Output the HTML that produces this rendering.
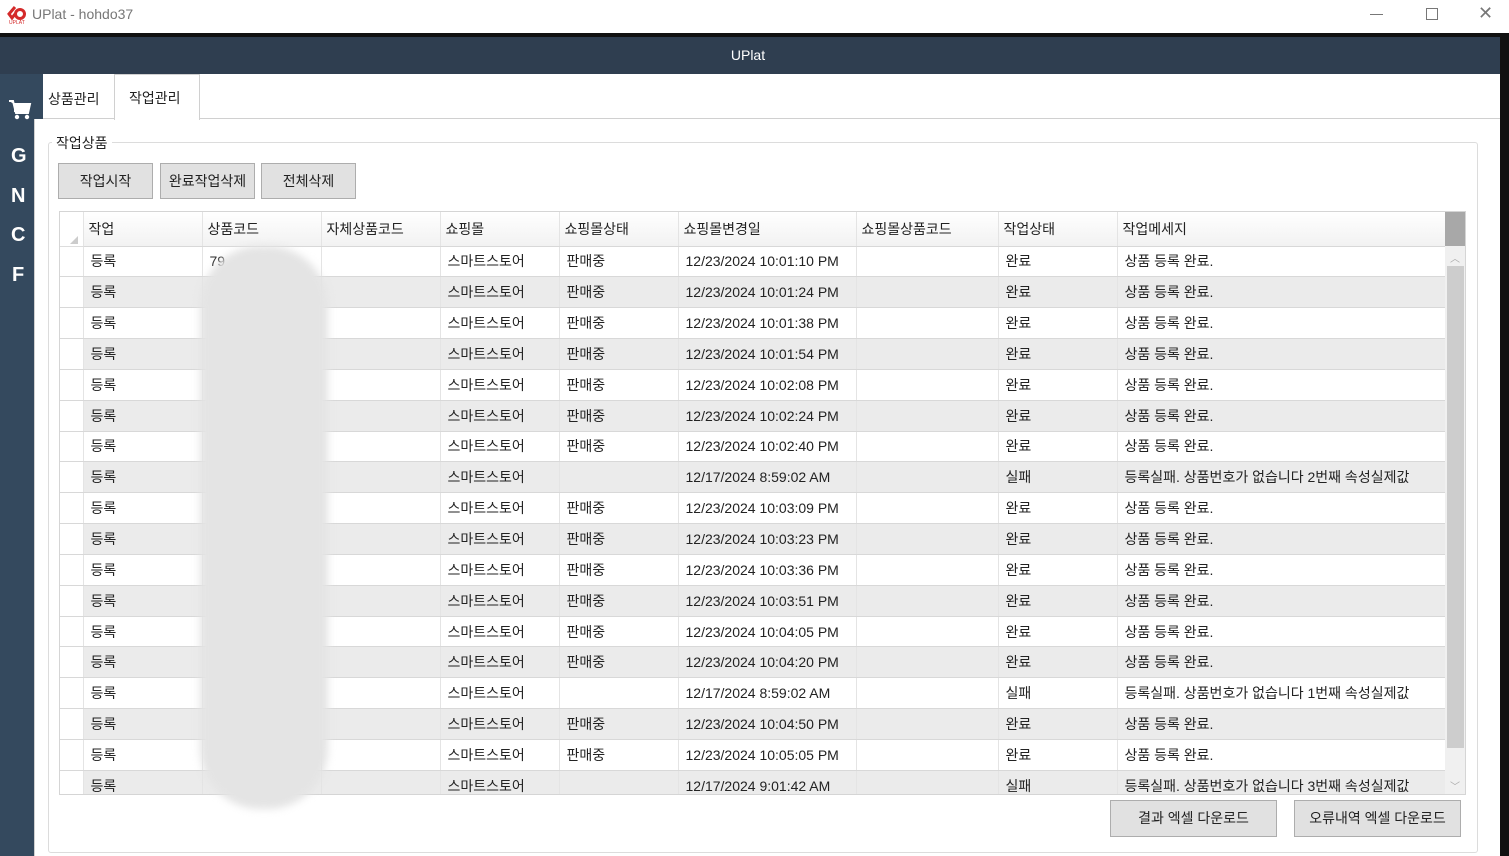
<!DOCTYPE html>
<html><head><meta charset="utf-8"><style>
*{margin:0;padding:0;box-sizing:border-box}
body{width:1509px;height:856px;overflow:hidden;background:#fff;font-family:"Liberation Sans","Noto Sans CJK KR",sans-serif;position:relative;color:#222}
.a{position:absolute}
.btn{position:absolute;background:#e1e1e1;border:1px solid #adadad;font-size:14px;text-align:center;color:#222}
table{border-collapse:collapse;table-layout:fixed;font-size:14px}
td{height:30.85px;border-right:1px solid #e4e4e4;border-bottom:1px solid #d8d8d8;padding-left:7px;white-space:nowrap;overflow:hidden}
tr.h td{padding-left:5px}
tr.g td{background:#ebebeb}
td.rh{background:#fff!important;border-right:1px solid #e4e4e4;padding:0}
</style></head><body>
<div class="a" style="left:0;top:0;width:1509px;height:33px;background:#fff"></div>
<svg class="a" style="left:6px;top:5px" width="22" height="20" viewBox="0 0 22 20"><path d="M9 2 L3 9 L6 13 L9 9" stroke="#d42a2a" stroke-width="3" fill="none"/><circle cx="14" cy="9" r="4.5" stroke="#d42a2a" stroke-width="3" fill="none"/><text x="3" y="19" font-size="5" fill="#d42a2a" font-family="Liberation Sans">UPLAT</text></svg>
<div class="a" style="left:32px;top:6px;font-size:14px;color:#777">UPlat - hohdo37</div>
<div class="a" style="left:1370px;top:14px;width:13px;height:1px;background:#777"></div>
<div class="a" style="left:1426px;top:8px;width:12px;height:12px;border:1px solid #777"></div>
<div class="a" style="left:1478px;top:3px;font-size:18px;color:#777">✕</div>
<div class="a" style="left:0;top:33px;width:1509px;height:4px;background:#111"></div>
<div class="a" style="left:1500px;top:33px;width:9px;height:823px;background:#111"></div>
<div class="a" style="left:0;top:37px;width:1500px;height:37px;background:#2f3e50"></div>
<div class="a" style="left:-2px;top:47px;width:1500px;text-align:center;color:#fff;font-size:14px">UPlat</div>
<div class="a" style="left:0;top:74px;width:34px;height:782px;background:#34495e"></div>
<div class="a" style="left:34px;top:74px;width:9px;height:45px;background:#34495e"></div>
<svg class="a" style="left:8px;top:99px" width="24" height="22" viewBox="0 0 24 22"><path d="M1 2 H5 L8 14 H20 L22 5 H6" fill="#fff" stroke="#fff" stroke-width="2"/><rect x="6" y="5" width="15" height="8" fill="#fff"/><circle cx="9" cy="18" r="2.2" fill="#fff"/><circle cx="19" cy="18" r="2.2" fill="#fff"/></svg>
<div class="a" style="left:11px;top:144px;color:#fff;font-weight:bold;font-size:20px;line-height:24px">G</div>
<div class="a" style="left:11px;top:184px;color:#fff;font-weight:bold;font-size:20px;line-height:24px">N</div>
<div class="a" style="left:11px;top:223px;color:#fff;font-weight:bold;font-size:20px;line-height:24px">C</div>
<div class="a" style="left:12px;top:263px;color:#fff;font-weight:bold;font-size:20px;line-height:24px">F</div>
<div class="a" style="left:43px;top:118px;width:1457px;height:1px;background:#d0d0d0"></div>
<div class="a" style="left:48px;top:89px;font-size:14px">상품관리</div>
<div class="a" style="left:114px;top:74px;width:86px;height:46px;border:1px solid #d0d0d0;border-bottom:none;background:#fff"></div>
<div class="a" style="left:129px;top:88px;font-size:14px">작업관리</div>
<div class="a" style="left:34px;top:119px;width:9px;height:737px;background:#fff;border-left:1px solid #d0d0d0"></div>
<div class="a" style="left:48px;top:142px;width:1430px;height:711px;border:1px solid #dcdcdc;border-radius:3px"></div>
<div class="a" style="left:52px;top:133px;padding:0 4px;background:#fff;font-size:14px">작업상품</div>
<div class="btn" style="left:58px;top:163px;width:95px;height:36px;line-height:34px">작업시작</div>
<div class="btn" style="left:160px;top:163px;width:95px;height:36px;line-height:34px">완료작업삭제</div>
<div class="btn" style="left:261px;top:163px;width:95px;height:36px;line-height:34px">전체삭제</div>
<div class="a" style="left:59px;top:211px;width:1407px;height:584px;border:1px solid #d5d5d5;overflow:hidden;background:#fff">
<table style="width:1386px">
<colgroup><col style="width:23px"><col style="width:119px"><col style="width:119px"><col style="width:119px"><col style="width:119px"><col style="width:119px"><col style="width:178px"><col style="width:142px"><col style="width:119px"><col style="width:329px"></colgroup>
<tr class="h" style="background:linear-gradient(#fff,#f2f2f2)"><td class="rh" style="height:34px;border-bottom:1px solid #ddd;position:relative"><div style="position:absolute;left:10px;bottom:2px;width:0;height:0;border-left:8px solid transparent;border-bottom:8px solid #ccc"></div></td><td style="height:34px">작업</td><td>상품코드</td><td>자체상품코드</td><td>쇼핑몰</td><td>쇼핑몰상태</td><td>쇼핑몰변경일</td><td>쇼핑몰상품코드</td><td>작업상태</td><td>작업메세지</td></tr>
<tr><td class="rh"></td><td>등록</td><td>79</td><td></td><td>스마트스토어</td><td>판매중</td><td>12/23/2024 10:01:10 PM</td><td></td><td>완료</td><td>상품 등록 완료.</td></tr>
<tr class="g"><td class="rh"></td><td>등록</td><td></td><td></td><td>스마트스토어</td><td>판매중</td><td>12/23/2024 10:01:24 PM</td><td></td><td>완료</td><td>상품 등록 완료.</td></tr>
<tr><td class="rh"></td><td>등록</td><td></td><td></td><td>스마트스토어</td><td>판매중</td><td>12/23/2024 10:01:38 PM</td><td></td><td>완료</td><td>상품 등록 완료.</td></tr>
<tr class="g"><td class="rh"></td><td>등록</td><td></td><td></td><td>스마트스토어</td><td>판매중</td><td>12/23/2024 10:01:54 PM</td><td></td><td>완료</td><td>상품 등록 완료.</td></tr>
<tr><td class="rh"></td><td>등록</td><td></td><td></td><td>스마트스토어</td><td>판매중</td><td>12/23/2024 10:02:08 PM</td><td></td><td>완료</td><td>상품 등록 완료.</td></tr>
<tr class="g"><td class="rh"></td><td>등록</td><td></td><td></td><td>스마트스토어</td><td>판매중</td><td>12/23/2024 10:02:24 PM</td><td></td><td>완료</td><td>상품 등록 완료.</td></tr>
<tr><td class="rh"></td><td>등록</td><td></td><td></td><td>스마트스토어</td><td>판매중</td><td>12/23/2024 10:02:40 PM</td><td></td><td>완료</td><td>상품 등록 완료.</td></tr>
<tr class="g"><td class="rh"></td><td>등록</td><td></td><td></td><td>스마트스토어</td><td></td><td>12/17/2024 8:59:02 AM</td><td></td><td>실패</td><td>등록실패. 상품번호가 없습니다 2번째 속성실제값</td></tr>
<tr><td class="rh"></td><td>등록</td><td></td><td></td><td>스마트스토어</td><td>판매중</td><td>12/23/2024 10:03:09 PM</td><td></td><td>완료</td><td>상품 등록 완료.</td></tr>
<tr class="g"><td class="rh"></td><td>등록</td><td></td><td></td><td>스마트스토어</td><td>판매중</td><td>12/23/2024 10:03:23 PM</td><td></td><td>완료</td><td>상품 등록 완료.</td></tr>
<tr><td class="rh"></td><td>등록</td><td></td><td></td><td>스마트스토어</td><td>판매중</td><td>12/23/2024 10:03:36 PM</td><td></td><td>완료</td><td>상품 등록 완료.</td></tr>
<tr class="g"><td class="rh"></td><td>등록</td><td></td><td></td><td>스마트스토어</td><td>판매중</td><td>12/23/2024 10:03:51 PM</td><td></td><td>완료</td><td>상품 등록 완료.</td></tr>
<tr><td class="rh"></td><td>등록</td><td></td><td></td><td>스마트스토어</td><td>판매중</td><td>12/23/2024 10:04:05 PM</td><td></td><td>완료</td><td>상품 등록 완료.</td></tr>
<tr class="g"><td class="rh"></td><td>등록</td><td></td><td></td><td>스마트스토어</td><td>판매중</td><td>12/23/2024 10:04:20 PM</td><td></td><td>완료</td><td>상품 등록 완료.</td></tr>
<tr><td class="rh"></td><td>등록</td><td></td><td></td><td>스마트스토어</td><td></td><td>12/17/2024 8:59:02 AM</td><td></td><td>실패</td><td>등록실패. 상품번호가 없습니다 1번째 속성실제값</td></tr>
<tr class="g"><td class="rh"></td><td>등록</td><td></td><td></td><td>스마트스토어</td><td>판매중</td><td>12/23/2024 10:04:50 PM</td><td></td><td>완료</td><td>상품 등록 완료.</td></tr>
<tr><td class="rh"></td><td>등록</td><td></td><td></td><td>스마트스토어</td><td>판매중</td><td>12/23/2024 10:05:05 PM</td><td></td><td>완료</td><td>상품 등록 완료.</td></tr>
<tr class="g"><td class="rh"></td><td>등록</td><td></td><td></td><td>스마트스토어</td><td></td><td>12/17/2024 9:01:42 AM</td><td></td><td>실패</td><td>등록실패. 상품번호가 없습니다 3번째 속성실제값</td></tr>
</table>
<div class="a" style="left:1385px;top:0;width:20px;height:34px;background:#a8a8a8"></div>
<div class="a" style="left:1385px;top:34px;width:20px;height:550px;background:#f0f0f0"></div>
<div class="a" style="left:1387px;top:54px;width:17px;height:482px;background:#cdcdcd"></div>
<div class="a" style="left:1390px;top:38px;font-size:10px;color:#aaa">︿</div>
<div class="a" style="left:1390px;top:566px;font-size:10px;color:#aaa">﹀</div>
</div>
<div class="a" style="left:200px;top:246px;width:128px;height:563px;border-radius:60px;background:#e4e4e4;filter:blur(4px)"></div>
<div class="btn" style="left:1110px;top:800px;width:167px;height:37px;line-height:35px">결과 엑셀 다운로드</div>
<div class="btn" style="left:1294px;top:800px;width:167px;height:37px;line-height:35px">오류내역 엑셀 다운로드</div>
</body></html>
